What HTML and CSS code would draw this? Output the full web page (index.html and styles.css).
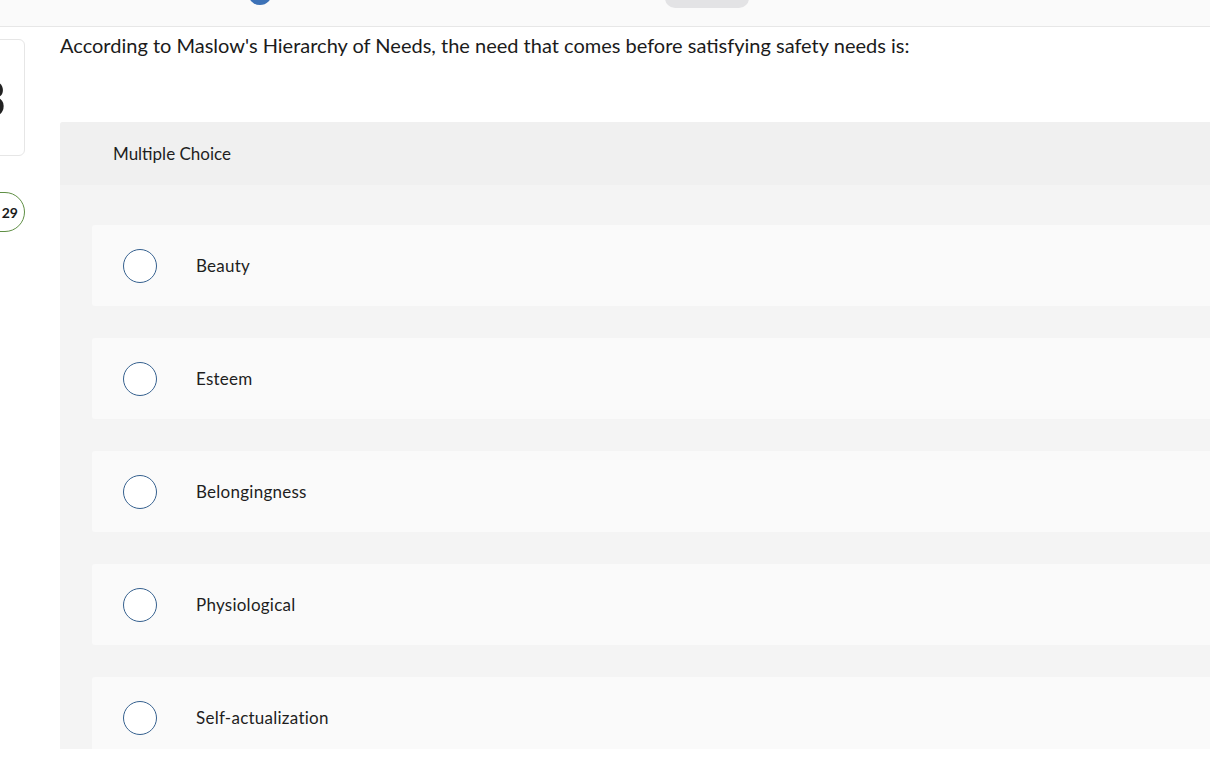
FILE: index.html
```html
<!DOCTYPE html>
<html lang="en">
<head>
<meta charset="utf-8">
<title>Multiple Choice</title>
<link rel="stylesheet" href="styles.css">
</head>
<body>
<header class="topbar">
  <span class="top-title">Assignment g</span>
  <span class="top-dot">i</span>
  <span class="top-pill"></span>
</header>
<div class="layout">
  <aside class="sidebar">
    <div class="qcard"><span class="qnum">3</span></div>
    <div class="badge"><span>29</span></div>
  </aside>
  <main class="main">
    <p class="question">According to Maslow's Hierarchy of Needs, the need that comes before satisfying safety needs is:</p>
    <section class="panel">
      <div class="panel-head">Multiple Choice</div>
      <div class="panel-body">
        <label class="option"><span class="radio"></span><span class="opt-text">Beauty</span></label>
        <label class="option"><span class="radio"></span><span class="opt-text">Esteem</span></label>
        <label class="option"><span class="radio"></span><span class="opt-text">Belongingness</span></label>
        <label class="option"><span class="radio"></span><span class="opt-text">Physiological</span></label>
        <label class="option"><span class="radio"></span><span class="opt-text">Self-actualization</span></label>
      </div>
    </section>
  </main>
</div>
</body>
</html>
```
FILE: styles.css
```css
html, body {
  margin: 0;
  padding: 0;
  background: #ffffff;
  overflow: hidden;
  font-family: Lato, "Open Sans", "Liberation Sans", sans-serif;
  color: #1c1c1c;
}

.topbar {
  height: 26px;
  background: #fafafa;
  border-bottom: 1px solid #e7e7e7;
  display: flex;
  align-items: flex-start;
  overflow: hidden;
}

.top-title {
  font-size: 18px;
  line-height: 18px;
  margin-top: -16px;
  margin-left: -118px;
  color: #222;
  white-space: nowrap;
  width: 118px;
  text-align: right;
}

.top-dot {
  width: 24px;
  height: 24px;
  border-radius: 50%;
  background: #3d72b7;
  color: #fff;
  margin-top: -19px;
  margin-left: 248px;
  font-size: 14px;
  font-weight: 700;
  line-height: 28px;
  text-align: center;
}

.top-pill {
  width: 84px;
  height: 26px;
  border-radius: 10px;
  background: #e3e3e5;
  margin-top: -18px;
  margin-left: 393px;
}

.layout {
  display: flex;
  align-items: flex-start;
  padding-top: 6px;
}

.sidebar {
  width: 24px;
  flex: 0 0 24px;
  display: flex;
  flex-direction: column;
  padding-top: 6px;
}

.qcard {
  width: 60px;
  height: 115px;
  margin-left: -37px;
  border: 1px solid #e6e6e6;
  border-radius: 6px;
  display: flex;
  align-items: center;
  justify-content: flex-end;
}

.qnum {
  font-size: 50px;
  font-weight: 700;
  line-height: 50px;
  color: #222;
  margin-right: 18px;
}

.badge {
  margin-top: 36px;
  width: 54px;
  height: 38px;
  margin-left: -37px;
  border: 1.5px solid #5f8f44;
  border-radius: 21px;
  display: flex;
  align-items: center;
  justify-content: flex-end;
  padding-right: 6px;
}

.badge span {
  font-size: 14px;
  font-weight: 700;
  color: #1b1b1b;
}

.main {
  margin-left: 36px;
  flex: 0 0 1200px;
}

.question {
  margin: 0;
  font-size: 20px;
  line-height: 24px;
  color: #1b1b1b;
}

.panel {
  margin-top: 65px;
  height: 627px;
  overflow: hidden;
  background: #f4f4f4;
  border-top-left-radius: 3px;
}

.panel-head {
  height: 63px;
  background: #f0f0f0;
  display: flex;
  align-items: center;
  padding-left: 53px;
  font-size: 17px;
  color: #1e1e1e;
}

.panel-body {
  padding: 40px 0 0 32px;
  display: flex;
  flex-direction: column;
  gap: 32px;
}

.option {
  height: 81px;
  flex: 0 0 81px;
  background: #fafafa;
  border-radius: 3px;
  display: flex;
  align-items: center;
  padding-left: 31px;
}

.radio {
  width: 32px;
  height: 32px;
  border: 1.5px solid #36618f;
  border-radius: 50%;
  background: #ffffff;
  flex: 0 0 auto;
}

.opt-text {
  margin-left: 39px;
  font-size: 17px;
  letter-spacing: 0.25px;
  color: #1e1e1e;
}
```
